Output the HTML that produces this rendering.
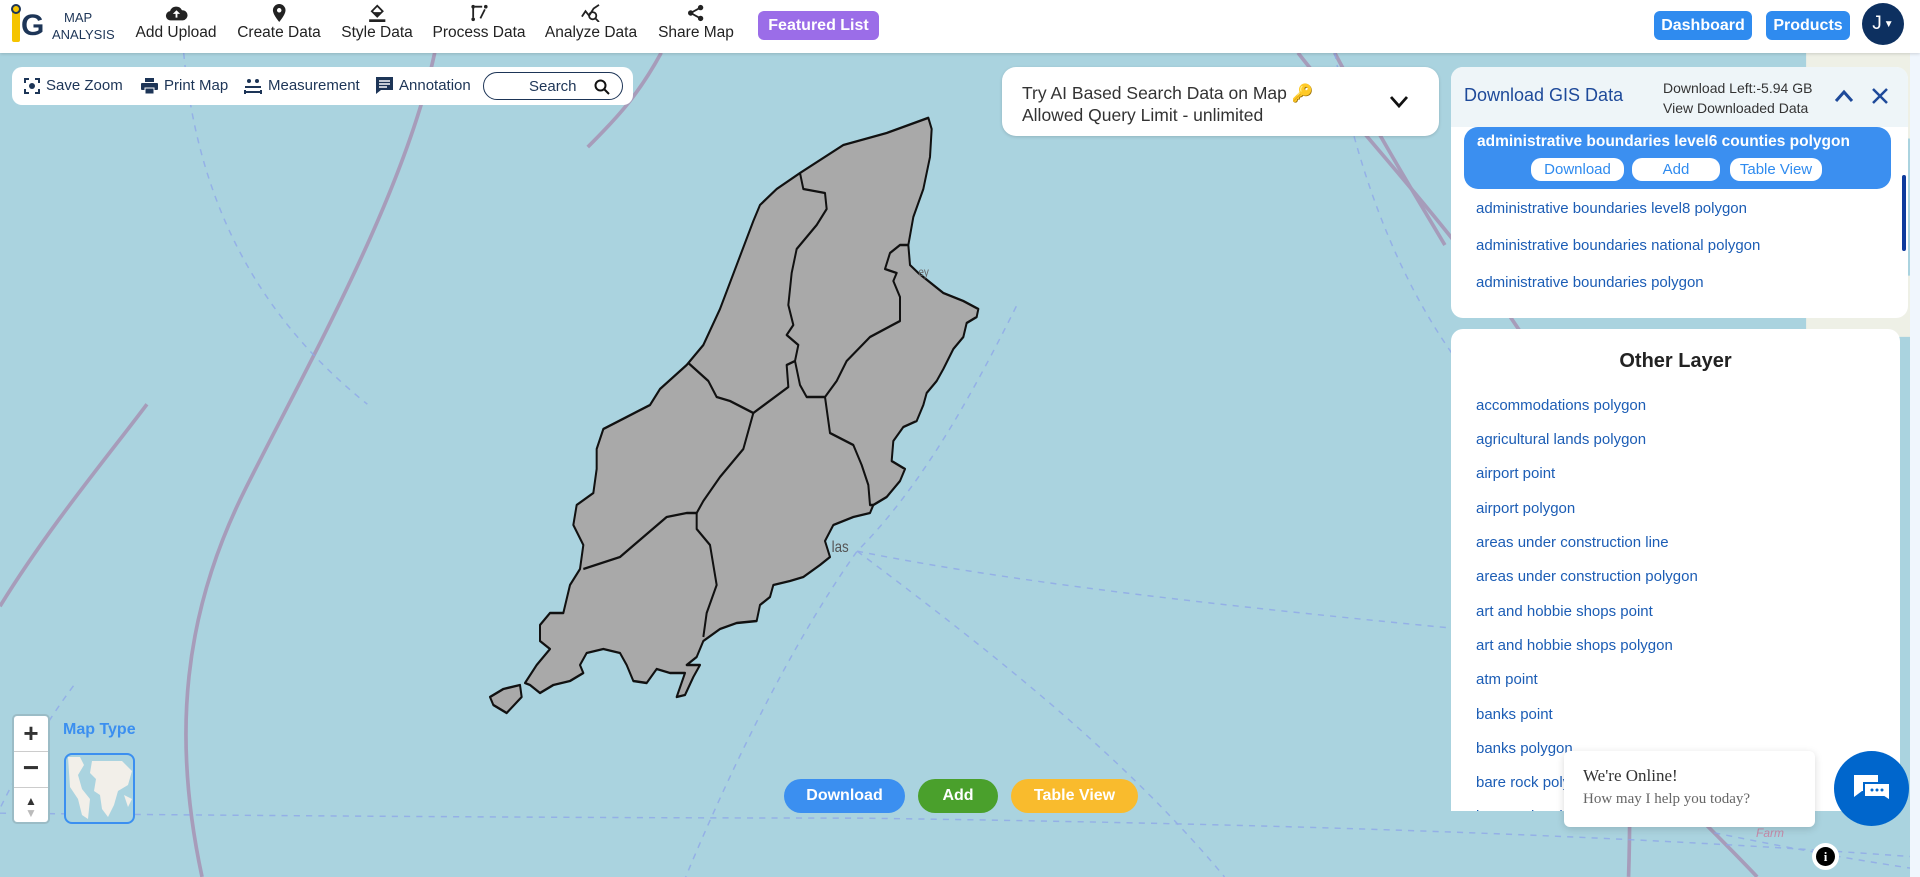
<!DOCTYPE html>
<html><head><meta charset="utf-8">
<style>
*{margin:0;padding:0;box-sizing:border-box}
body{width:1920px;height:877px;overflow:hidden;position:relative;font-family:"Liberation Sans",Arial,sans-serif;background:#aad3df}
.abs{position:absolute}
.nav{left:0;top:0;width:1920px;height:53px;background:#fff;box-shadow:0 1px 3px rgba(0,0,0,.15);z-index:5}
.mi{position:absolute;top:4px;text-align:center;font-size:15.5px;color:#222;white-space:nowrap;transform:translateX(-50%)}
.mi svg{display:block;margin:0 auto 2px}
.btn{position:absolute;border-radius:6px;color:#fff;font-weight:bold;font-size:16px;display:flex;align-items:center;justify-content:center}
.tb{left:12px;top:67px;width:621px;height:38px;background:#fff;border-radius:10px;z-index:4}
.tbi{position:absolute;top:10px;font-size:15px;color:#1d3557;display:flex;align-items:center;gap:6px;white-space:nowrap}
.panel{background:#fff;border-radius:12px;z-index:4}
.lk{position:absolute;left:25px;font-size:15px;color:#1c5db5;white-space:nowrap}
.sb{position:absolute;background:#fff;color:#2f8bef;border-radius:10px;font-size:15px;display:flex;align-items:center;justify-content:center;height:23px;top:31px}
</style></head><body>

<svg class="abs" style="left:0;top:0" width="1920" height="877" viewBox="0 0 1568 716">
<rect x="1475" y="43" width="93" height="70" fill="#eef0e6"/>
<rect x="1475" y="225" width="93" height="50" fill="#eef0e6"/>
<g fill="none" stroke="#a58aae" stroke-width="3" opacity=".75">
<path d="M355 43 C330 160 250 300 200 400 C150 500 140 600 165 716"/>
<path d="M0 495 C40 430 90 370 120 330"/>
<path d="M1060 43 C1120 120 1200 200 1260 300 C1320 420 1335 560 1330 716"/>
<path d="M1090 43 C1120 100 1150 150 1180 200"/>
<path d="M1380 660 C1400 680 1420 700 1435 716"/>
<path d="M540 43 C520 80 500 100 480 120"/>
</g>
<g fill="none" stroke="#8fa8e8" stroke-width="1.2" stroke-dasharray="5,5" opacity=".8">
<path d="M0 664 C200 666 500 668 700 668 C1000 672 1300 680 1568 700"/>
<path d="M830 250 C790 330 750 400 700 450 C650 520 600 620 560 716"/>
<path d="M700 450 C850 480 1050 500 1260 520"/>
<path d="M700 450 C820 540 920 620 1000 716"/>
<path d="M1090 43 C1120 200 1180 300 1250 360"/>
<path d="M150 43 C160 150 200 250 300 330"/>
<path d="M60 560 C30 600 10 640 0 660"/>
<path d="M1400 680 C1450 690 1500 700 1568 710"/>
</g>
</svg>

<svg class="abs" style="left:470px;top:105px" width="520" height="630" viewBox="0 0 1560 1575" preserveAspectRatio="none">
<g fill="#a9a9a9" stroke="#111" stroke-width="6" stroke-linejoin="round">
<path d="M1375 32 L1385 60 1380 130 1360 210 1330 280 1315 350 1320 400 1345 420 1390 450 1420 470 1480 490 1525 510 1520 530 1490 545 1480 580 1450 610 1420 660 1400 690 1370 720 1360 750 1340 790 1300 805 1270 840 1265 890 1305 910 1290 940 1250 980 1210 1000 1200 1020 1150 1030 1090 1050 1065 1090 1080 1130 1050 1150 1000 1180 960 1190 910 1200 900 1230 870 1250 860 1290 800 1295 750 1310 700 1340 680 1380 650 1400 690 1400 670 1430 645 1475 620 1480 645 1420 600 1420 560 1410 530 1445 490 1440 470 1400 450 1370 400 1360 350 1370 330 1400 340 1420 300 1440 250 1450 210 1470 180 1450 165 1445 200 1400 240 1360 210 1340 210 1300 240 1270 280 1270 300 1200 330 1160 340 1100 310 1050 320 1000 370 970 380 910 380 860 400 810 470 780 540 750 570 710 650 650 700 600 750 510 800 400 850 290 870 250 920 210 990 170 1120 100 1250 70 Z"/>
<path d="M60 1480 L100 1460 150 1450 155 1480 110 1520 70 1500 Z"/>
</g>
<g fill="none" stroke="#111" stroke-width="6" stroke-linejoin="round">
<path d="M990 170 L1000 210 1065 220 1070 260 1040 300 980 360 965 420 955 500 970 550 950 575 985 600 975 640 950 650 955 705 850 770"/>
<path d="M975 640 L990 700 1010 730 1065 730 1100 690 1130 640 1200 580 1290 540 1290 480 1270 440 1280 420 1245 410 1260 370 1290 350 1315 350"/>
<path d="M655 645 L715 690 740 730 780 740 850 770 840 800 820 860 750 930 700 990 680 1020 650 1020 590 1030 450 1130 340 1160"/>
<path d="M680 1020 L680 1060 720 1100 740 1200 710 1270 700 1330"/>
<path d="M1065 730 L1080 820 1150 850 1175 900 1195 950 1200 1000 1210 1000"/>
</g>
<text x="1085" y="1118" font-size="40" fill="#555" font-family="Liberation Sans">las</text>
<text x="1345" y="428" font-size="30" fill="#666" font-family="Liberation Sans">ey</text>
</svg>

<div class="abs nav">
  <div class="abs" style="left:12px;top:8px;width:8px;height:34px;background:#f5c400;border-radius:2px"></div>
  <div class="abs" style="left:11px;top:4px;width:10px;height:10px;border:2px solid #1d3557;border-radius:50%;background:#f5c400"></div>
  <div class="abs" style="left:21px;top:11px;font-size:30px;font-weight:bold;color:#1d3557;line-height:30px">G</div>
  <div class="abs" style="left:64px;top:10px;font-size:13px;color:#1d3557;line-height:16px">MAP</div>
  <div class="abs" style="left:52px;top:27px;font-size:13px;color:#1d3557;line-height:16px">ANALYSIS</div>

  <div class="mi" style="left:176px"><svg width="22" height="18" viewBox="0 0 24 18"><path d="M6 17a5 5 0 0 1-1-10 7 7 0 0 1 13-1 5 5 0 0 1 1 11z" fill="#222"/><path d="M12 6l-4 4h3v4h2v-4h3z" fill="#fff"/></svg>Add Upload</div>
  <div class="mi" style="left:279px"><svg width="16" height="18" viewBox="0 0 16 20"><path d="M8 0a7 7 0 0 1 7 7c0 5-7 13-7 13S1 12 1 7a7 7 0 0 1 7-7z" fill="#222"/><circle cx="8" cy="7" r="2.5" fill="#fff"/></svg>Create Data</div>
  <div class="mi" style="left:377px"><svg width="22" height="18" viewBox="0 0 22 20"><path d="M5 8l6-6 6 6-6 6z" fill="none" stroke="#222" stroke-width="2"/><path d="M6 9h10l-5 5z" fill="#222"/><rect x="2" y="17" width="18" height="3" fill="#222"/></svg>Style Data</div>
  <div class="mi" style="left:479px"><svg width="20" height="18" viewBox="0 0 20 20"><circle cx="3" cy="3" r="2" fill="#222"/><circle cx="17" cy="3" r="2" fill="#222"/><circle cx="3" cy="17" r="2" fill="#222"/><path d="M3 5v10M5 3h8M16 6l-5 10" stroke="#222" stroke-width="2" fill="none"/></svg>Process Data</div>
  <div class="mi" style="left:591px"><svg width="22" height="18" viewBox="0 0 22 20"><path d="M1 14l4-6 4 5 5-8 6-4" stroke="#222" stroke-width="2" fill="none"/><circle cx="13" cy="13" r="4" stroke="#222" stroke-width="2" fill="none"/><path d="M16 16l4 4" stroke="#222" stroke-width="2"/></svg>Analyze Data</div>
  <div class="mi" style="left:696px"><svg width="18" height="18" viewBox="0 0 20 20"><circle cx="15" cy="4" r="3" fill="#222"/><circle cx="4" cy="10" r="3" fill="#222"/><circle cx="15" cy="16" r="3" fill="#222"/><path d="M15 4L4 10l11 6" stroke="#222" stroke-width="2" fill="none"/></svg>Share Map</div>

  <div class="btn" style="left:758px;top:11px;width:121px;height:29px;background:#9b6de8">Featured List</div>
  <div class="btn" style="left:1654px;top:11px;width:98px;height:29px;background:#2f8bef">Dashboard</div>
  <div class="btn" style="left:1766px;top:11px;width:84px;height:29px;background:#2f8bef">Products</div>
  <div class="abs" style="left:1862px;top:3px;width:42px;height:42px;border-radius:50%;background:#0d3060;color:#fff;font-size:19px;display:flex;align-items:center;justify-content:center">J<span style="font-size:10px;margin-left:2px">▼</span></div>
</div>

<div class="abs tb">
  <div class="tbi" style="left:12px"><svg width="16" height="16" viewBox="0 0 16 16"><path d="M1 5V1h4M11 1h4v4M15 11v4h-4M5 15H1v-4" stroke="#1d3557" stroke-width="2" fill="none"/><circle cx="8" cy="8" r="3" fill="#1d3557"/></svg>Save Zoom</div>
  <div class="tbi" style="left:129px"><svg width="17" height="16" viewBox="0 0 17 16"><rect x="4" y="0" width="9" height="4" fill="#1d3557"/><rect x="0" y="5" width="17" height="7" rx="1" fill="#1d3557"/><rect x="4" y="10" width="9" height="6" fill="#1d3557" stroke="#fff"/></svg>Print Map</div>
  <div class="tbi" style="left:232px"><svg width="18" height="16" viewBox="0 0 18 16"><circle cx="5" cy="3" r="2" fill="#1d3557"/><circle cx="13" cy="3" r="2" fill="#1d3557"/><path d="M1 9h16M1 14h16M1 12v4M17 12v4" stroke="#1d3557" stroke-width="2"/></svg>Measurement</div>
  <div class="tbi" style="left:364px"><svg width="17" height="17" viewBox="0 0 17 17"><path d="M0 0h17v13H5l-5 4z" fill="#1d3557"/><path d="M3 4h11M3 7h11M3 10h8" stroke="#fff" stroke-width="1.5"/></svg>Annotation</div>
  <div class="abs" style="left:471px;top:5px;width:140px;height:28px;border:1.5px solid #1d3557;border-radius:14px;font-size:15px;color:#1d3557;padding:5px 0 0 45px">Search<svg style="position:absolute;right:12px;top:6px" width="16" height="16" viewBox="0 0 16 16"><circle cx="6.5" cy="6.5" r="5" stroke="#111" stroke-width="2" fill="none"/><path d="M10 10l5 5" stroke="#111" stroke-width="2"/></svg></div>
</div>

<div class="abs panel" style="left:1002px;top:67px;width:437px;height:69px;border-radius:14px;box-shadow:0 1px 3px rgba(0,0,0,.15)">
  <div class="abs" style="left:20px;top:15px;font-size:17.5px;color:#333;line-height:22px">Try AI Based Search Data on Map <span style="color:#f2d048">🔑</span><br>Allowed Query Limit - unlimited</div>
  <svg class="abs" style="left:387px;top:28px" width="20" height="14" viewBox="0 0 20 14"><path d="M2 2l8 9 8-9" stroke="#111" stroke-width="2.8" fill="none"/></svg>
</div>

<div class="abs panel" style="left:1451px;top:67px;width:457px;height:251px;overflow:hidden">
  <div class="abs" style="left:0;top:0;width:457px;height:60px;background:#eef5f8"></div>
  <div class="abs" style="left:13px;top:18px;font-size:18px;color:#1e4a9a">Download GIS Data</div>
  <div class="abs" style="left:212px;top:11px;font-size:14px;color:#333;line-height:20px">Download Left:-5.94 GB<br>View Downloaded Data</div>
  <svg class="abs" style="left:383px;top:22px" width="20" height="14" viewBox="0 0 20 14"><path d="M2 12l8-9 8 9" stroke="#1e4a9a" stroke-width="3" fill="none"/></svg>
  <svg class="abs" style="left:420px;top:20px" width="18" height="18" viewBox="0 0 18 18"><path d="M2 2l14 14M16 2L2 16" stroke="#1e4a9a" stroke-width="2.5"/></svg>
  <div class="abs" style="left:13px;top:60px;width:427px;height:62px;background:#3b8ff0;border-radius:14px">
    <div class="abs" style="left:13px;top:6px;font-size:15.5px;color:#fff;font-weight:bold;white-space:nowrap">administrative boundaries level6 counties polygon</div>
    <div class="sb" style="left:67px;width:93px">Download</div>
    <div class="sb" style="left:168px;width:88px">Add</div>
    <div class="sb" style="left:266px;width:92px">Table View</div>
  </div>
  <div class="lk" style="top:133px">administrative boundaries level8 polygon</div>
  <div class="lk" style="top:170px">administrative boundaries national polygon</div>
  <div class="lk" style="top:207px">administrative boundaries polygon</div>
</div>
<div class="abs" style="left:1902px;top:175px;width:4px;height:76px;background:#0d3a9c;border-radius:2px;z-index:5"></div>
<div class="abs" style="left:1910px;top:53px;width:10px;height:824px;background:#f0f6fd;z-index:3"></div>

<div class="abs panel" style="left:1451px;top:329px;width:449px;height:482px;border-radius:12px 12px 0 0;overflow:hidden">
  <div class="abs" style="left:0;width:449px;top:21px;text-align:center;font-size:20px;font-weight:bold;color:#222">Other Layer</div>
  <div class="lk" style="top:68px">accommodations polygon</div>
  <div class="lk" style="top:102px">agricultural lands polygon</div>
  <div class="lk" style="top:136px">airport point</div>
  <div class="lk" style="top:171px">airport polygon</div>
  <div class="lk" style="top:205px">areas under construction line</div>
  <div class="lk" style="top:239px">areas under construction polygon</div>
  <div class="lk" style="top:274px">art and hobbie shops point</div>
  <div class="lk" style="top:308px">art and hobbie shops polygon</div>
  <div class="lk" style="top:342px">atm point</div>
  <div class="lk" style="top:377px">banks point</div>
  <div class="lk" style="top:411px">banks polygon</div>
  <div class="lk" style="top:445px">bare rock polygon</div>
  <div class="lk" style="top:479px">bare rock point</div>
</div>

<div class="btn" style="left:784px;top:779px;width:121px;height:34px;border-radius:17px;background:#3b8ff0">Download</div>
<div class="btn" style="left:918px;top:779px;width:80px;height:34px;border-radius:17px;background:#4aa02c">Add</div>
<div class="btn" style="left:1011px;top:779px;width:127px;height:34px;border-radius:17px;background:#f9bb2d">Table View</div>

<div class="abs" style="left:12px;top:714px;width:38px;height:110px;background:#fff;border:2px solid #9bbcc6;border-radius:5px">
  <div style="height:36px;border-bottom:1px solid #ccc;text-align:center;font-size:26px;font-weight:bold;line-height:34px;color:#333">+</div>
  <div style="height:36px;border-bottom:1px solid #ccc;text-align:center;font-size:28px;font-weight:bold;line-height:32px;color:#333">−</div>
  <div style="text-align:center;font-size:12px;line-height:12px;color:#333;padding-top:7px">▲<br><span style="color:#bbb">▼</span></div>
</div>
<div class="abs" style="left:63px;top:721px;font-size:16px;font-weight:bold;color:#3b8ff0">Map Type</div>
<div class="abs" style="left:64px;top:753px;width:71px;height:71px;border:2px solid #3b8ff0;border-radius:8px;background:#aad3df;overflow:hidden">
  <svg width="71" height="71" viewBox="0 0 71 71"><path d="M2 2h12l4 8-6 10 4 14 8 10-2 20-6-4-4-16-8-12z" fill="#f2efe9"/><path d="M26 6h30l10 10-4 14-10 6-4 14-6 12-6-8-2-14-6-4 2-12-6-6z" fill="#f2efe9"/><path d="M58 40l8 4-4 8z" fill="#f2efe9"/></svg>
</div>

<div class="abs" style="left:1564px;top:751px;width:251px;height:76px;background:#fff;border-radius:6px;box-shadow:0 2px 8px rgba(0,0,0,.15);font-family:'Liberation Serif',serif;z-index:8">
  <div class="abs" style="left:19px;top:15px;font-size:17px;color:#333">We're Online!</div>
  <div class="abs" style="left:19px;top:40px;font-size:15px;color:#666">How may I help you today?</div>
</div>
<div class="abs" style="left:1834px;top:751px;width:75px;height:75px;border-radius:50%;background:#0066cc;z-index:8">
  <svg class="abs" style="left:18px;top:22px" width="40" height="34" viewBox="0 0 40 34"><path d="M2 2h24v16H10l-8 6z" fill="#fff"/><path d="M12 10h26v18l-6-4H12z" fill="#fff" stroke="#0066cc" stroke-width="2"/><circle cx="20" cy="17" r="1.5" fill="#0066cc"/><circle cx="25" cy="17" r="1.5" fill="#0066cc"/><circle cx="30" cy="17" r="1.5" fill="#0066cc"/></svg>
</div>
<div class="abs" style="left:1756px;top:826px;font-size:12px;color:#c58aa8;font-style:italic">Farm</div>
<div class="abs" style="left:1812px;top:843px;width:27px;height:27px;border-radius:50%;background:#fff;display:flex;align-items:center;justify-content:center;z-index:8"><div style="width:19px;height:19px;border-radius:50%;background:#000;color:#fff;font-size:13px;font-weight:bold;text-align:center;line-height:19px;font-family:'Liberation Serif',serif">i</div></div>
</body></html>
